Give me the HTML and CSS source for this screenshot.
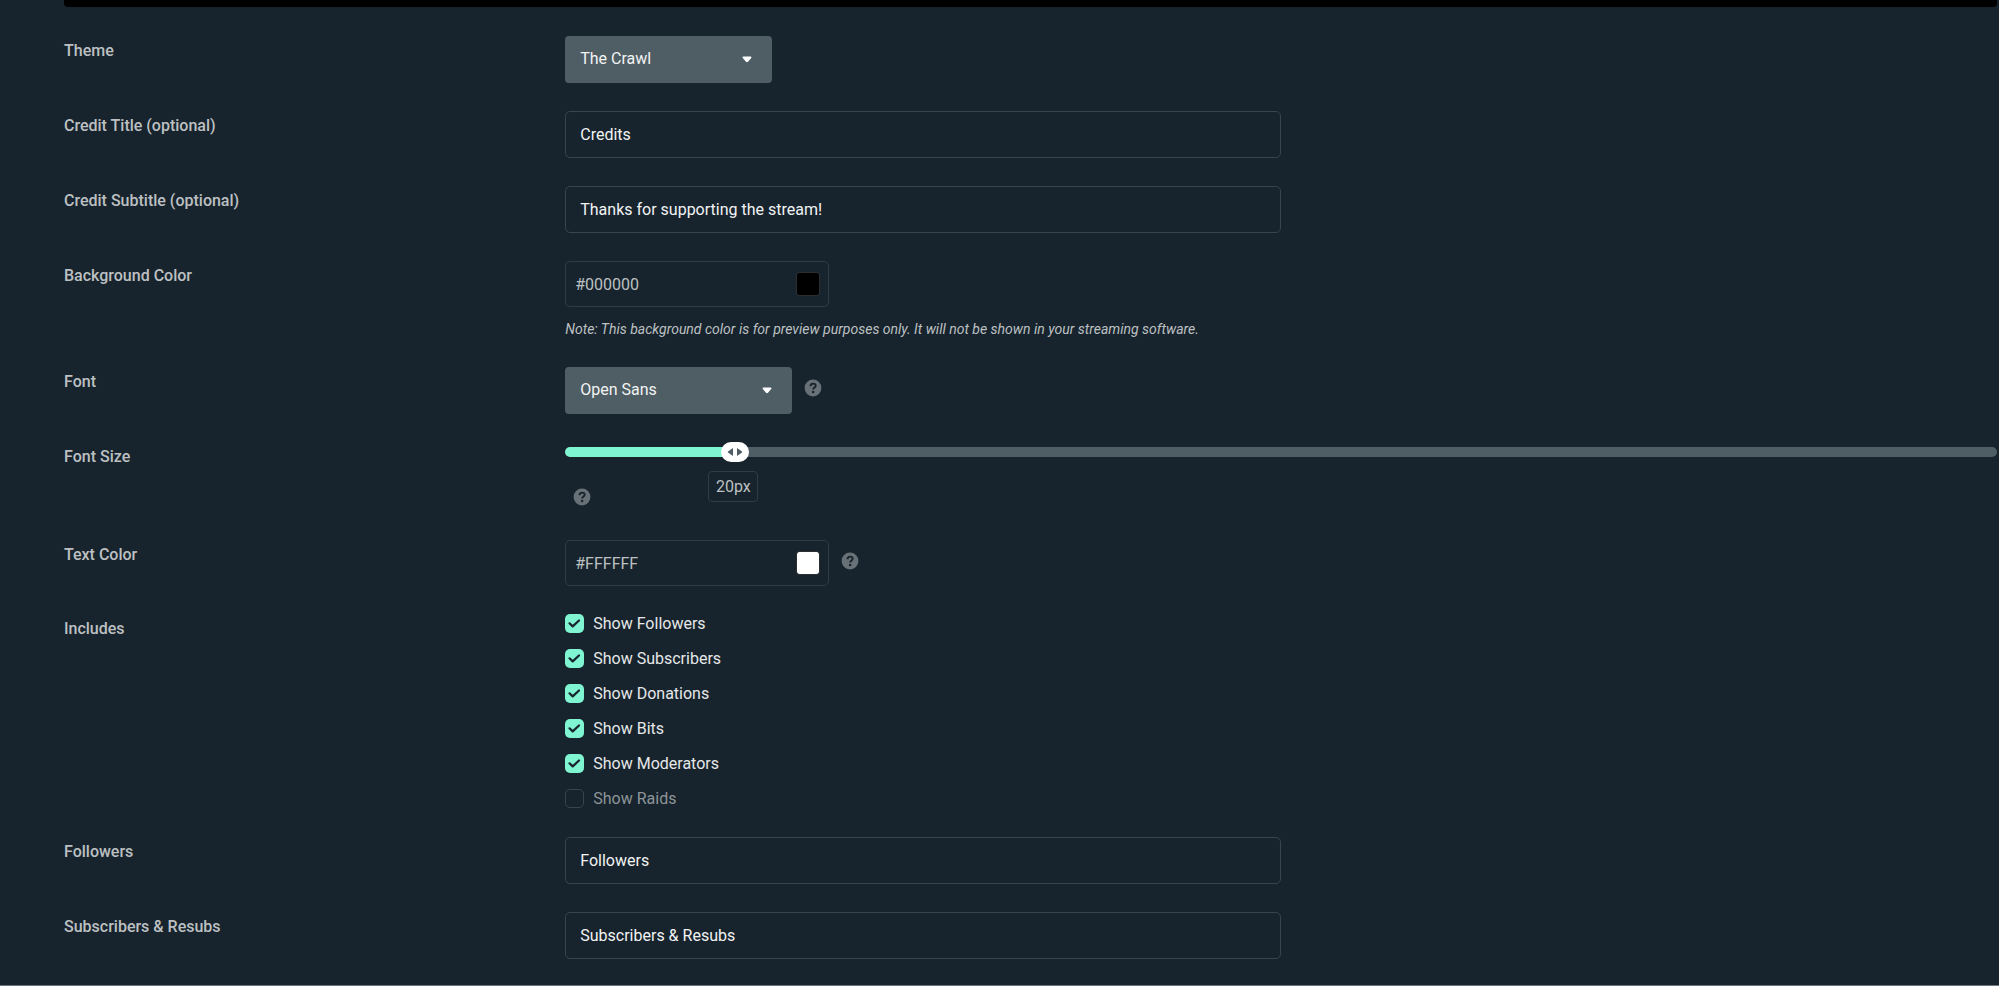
FILE: index.html
```html
<!DOCTYPE html>
<html lang="en">
<head>
  <meta charset="UTF-8" />
  <meta name="viewport" content="width=device-width, initial-scale=1.0" />
  <title>Credits Settings</title>
  <link rel="stylesheet" href="styles.css">
</head>

<body>
  <!-- help icon and caret, shared by the rows below -->
  <svg class="sprite" aria-hidden="true">
    <symbol id="help" viewBox="0 0 18 18">
      <circle cx="9" cy="9" r="8.4" fill="#687177" />
      <path d="M6.5 7.2C6.5 5.5 7.6 4.6 9.1 4.6s2.6.9 2.6 2.2c0 1.7-2.5 1.9-2.5 3.7" fill="none" stroke="#17242d" stroke-width="1.9" />
      <circle cx="9.1" cy="12.9" r="1.25" fill="#17242d" />
    </symbol>
    <symbol id="caret" viewBox="0 0 10 7">
      <path d="M1.4.5h7.2c.8 0 1.2.9.6 1.5L6 5.800c-.6.6-1.400.6-2 0L.8 2C.2 1.400.6.5 1.400.5z" fill="#fff" />
    </symbol>
  </svg>

  <main class="page">
    <div class="preview"></div>

    <form class="settings">
      <div class="row">
        <label class="row-label" for="theme">Theme</label>
        <div class="row-field">
          <div class="select select-theme">
            <select id="theme">
              <option>The Crawl</option>
            </select>
            <svg class="caret"><use href="#caret" /></svg>
          </div>
        </div>
      </div>

      <div class="row">
        <label class="row-label" for="title">Credit Title (optional)</label>
        <div class="row-field">
          <input class="text-input" type="text" id="title" value="Credits" />
        </div>
      </div>

      <div class="row">
        <label class="row-label" for="subtitle">Credit Subtitle (optional)</label>
        <div class="row-field">
          <input class="text-input" type="text" id="subtitle" value="Thanks for supporting the stream!" />
        </div>
      </div>

      <div class="row">
        <label class="row-label" for="bgcolor">Background Color</label>
        <div class="row-field">
          <div class="color-input">
            <input class="color-text" type="text" id="bgcolor" value="#000000" />
            <input class="swatch" type="color" value="#000000" aria-label="Pick background color" />
          </div>
          <p class="note">Note: This background color is for preview purposes only. It will not be shown in your streaming software.</p>
        </div>
      </div>

      <div class="row">
        <label class="row-label" for="font">Font</label>
        <div class="row-field">
          <div class="select select-font">
            <select id="font">
              <option>Open Sans</option>
            </select>
            <svg class="caret"><use href="#caret" /></svg>
          </div>
          <svg class="help"><use href="#help" /></svg>
        </div>
      </div>

      <div class="row">
        <label class="row-label" for="fontsize">Font Size</label>
        <div class="row-field">
          <div class="slider">
            <input type="range" id="fontsize" min="10" max="100" value="20" />
            <output class="slider-value" for="fontsize">20px</output>
          </div>
          <svg class="help help-below"><use href="#help" /></svg>
        </div>
      </div>

      <div class="row">
        <label class="row-label" for="textcolor">Text Color</label>
        <div class="row-field">
          <div class="color-input">
            <input class="color-text" type="text" id="textcolor" value="#FFFFFF" />
            <input class="swatch" type="color" value="#ffffff" aria-label="Pick text color" />
          </div>
          <svg class="help"><use href="#help" /></svg>
        </div>
      </div>

      <div class="row">
        <span class="row-label" id="includes">Includes</span>
        <div class="row-field checks" role="group" aria-labelledby="includes">
          <label class="check"><input type="checkbox" checked /><span>Show Followers</span></label>
          <label class="check"><input type="checkbox" checked /><span>Show Subscribers</span></label>
          <label class="check"><input type="checkbox" checked /><span>Show Donations</span></label>
          <label class="check"><input type="checkbox" checked /><span>Show Bits</span></label>
          <label class="check"><input type="checkbox" checked /><span>Show Moderators</span></label>
          <label class="check"><input type="checkbox" /><span>Show Raids</span></label>
        </div>
      </div>

      <div class="row">
        <label class="row-label" for="followers">Followers</label>
        <div class="row-field">
          <input class="text-input" type="text" id="followers" value="Followers" />
        </div>
      </div>

      <div class="row">
        <label class="row-label" for="subs">Subscribers &amp; Resubs</label>
        <div class="row-field">
          <input class="text-input" type="text" id="subs" value="Subscribers &amp; Resubs" />
        </div>
      </div>
    </form>
  </main>
</body>
</html>
```
FILE: styles.css
```css
* {
  box-sizing: border-box;
}
body {
  margin: 0;
  background-color: #17242d;
  color: #bdc0c2;
  font-family: Roboto, Arial, sans-serif;
  font-size: 16px;
}
input, select {
  font: inherit;
  margin: 0;
}
.sprite {
  display: none;
}
.page {
  min-height: 100vh;
  padding: 0 2px 26px 64px;
  border-bottom: 1px solid #6f767b;
}
.preview {
  height: 7px;
  background-color: #000;
  border-radius: 0 0 4px 4px;
}
.settings {
  display: flex;
  flex-direction: column;
  gap: 28px;
  padding-top: 29px;
}
.row {
  display: grid;
  grid-template-columns: 25% 1fr;
  column-gap: 18px;
  align-items: start;
}
.row-label {
  line-height: 30px;
  font-weight: 500;
}
.row-field {
  display: flex;
  flex-wrap: wrap;
  align-items: flex-start;
}

/* text boxes */
.text-input {
  width: 50%;
  height: 47px;
  padding: 0 14px;
  background: none;
  border: 1px solid #37454d;
  border-radius: 5px;
  color: #f2f3f3;
}
.color-input {
  display: flex;
  align-items: center;
  width: 264px;
  height: 46px;
  padding: 0 8px 0 9px;
  border: 1px solid #2f3d46;
  border-radius: 5px;
}
.color-text {
  flex: 1;
  min-width: 0;
  padding: 0;
  background: none;
  border: none;
  color: #bdc0c2;
}
.swatch {
  appearance: none;
  width: 24px;
  height: 24px;
  padding: 0;
  background: none;
  border: 1px solid #2b2f31;
  border-radius: 3px;
  cursor: pointer;
}
.swatch::-webkit-color-swatch-wrapper {
  padding: 0;
}
.swatch::-webkit-color-swatch {
  border: none;
  border-radius: 2px;
}
.note {
  width: 100%;
  margin: 12px 0 0;
  font-size: 14px;
  line-height: 20px;
  font-style: italic;
}

/* drop-downs */
.select {
  position: relative;
}
.select-theme {
  width: 207px;
}
.select-font {
  width: 227px;
}
.select select {
  appearance: none;
  display: block;
  width: 100%;
  height: 47px;
  padding: 0 40px 2px 15px;
  background-color: #4f5e65;
  border: none;
  border-radius: 4px;
  color: #f2f3f3;
  cursor: pointer;
}
.caret {
  position: absolute;
  top: 20px;
  right: 20px;
  width: 10px;
  height: 7px;
  pointer-events: none;
}
.help {
  width: 18px;
  height: 18px;
  margin: 12px 0 0 12px;
}
.help-below {
  margin: 26px 0 6px 8px;
}

/* slider */
.slider {
  position: relative;
  width: 100%;
  height: 20px;
}
.slider input {
  appearance: none;
  display: block;
  width: 100%;
  height: 20px;
  background: none;
  cursor: pointer;
}
.slider input::-webkit-slider-runnable-track {
  height: 10px;
  border-radius: 5px;
  background: linear-gradient(to right, #80f5d2 11%, #4f5e65 11%);
}
.slider input::-webkit-slider-thumb {
  appearance: none;
  width: 28px;
  height: 20px;
  margin-top: -5px;
  border-radius: 10px;
  background: #fff url("data:image/svg+xml,%3Csvg xmlns='http://www.w3.org/2000/svg' viewBox='0 0 16 8'%3E%3Cpath d='M6 0v8L1.300 4.800a1 1 0 0 1 0-1.600zM10 0v8l4.700-3.200a1 1 0 0 0 0-1.600z' fill='%234f5e65'/%3E%3C/svg%3E") center / 16px 8px no-repeat;
}
.slider-value {
  position: absolute;
  top: 29px;
  left: 10%;
  width: 50px;
  height: 31px;
  border: 1px solid #2f3d46;
  border-radius: 4px;
  line-height: 29px;
  text-align: center;
}

/* check boxes */
.checks {
  flex-direction: column;
  gap: 16px;
  padding-bottom: 1px;
}
.check {
  display: flex;
  align-items: center;
  gap: 9px;
  height: 19px;
  color: #8d9498;
  cursor: pointer;
}
.check input {
  appearance: none;
  width: 19px;
  height: 19px;
  border: 1px solid #37454d;
  border-radius: 5px;
}
.check input:checked {
  border: none;
  background: #80f5d2 url("data:image/svg+xml,%3Csvg xmlns='http://www.w3.org/2000/svg' viewBox='0 0 19 19'%3E%3Cpath d='M4.500 9.300l3.200 3.100 6.300-5.900' fill='none' stroke='%2317242d' stroke-width='2.200' stroke-linecap='round' stroke-linejoin='round'/%3E%3C/svg%3E") center / 19px 19px no-repeat;
}
.check input:checked + span {
  color: #e6e8e9;
}
```
